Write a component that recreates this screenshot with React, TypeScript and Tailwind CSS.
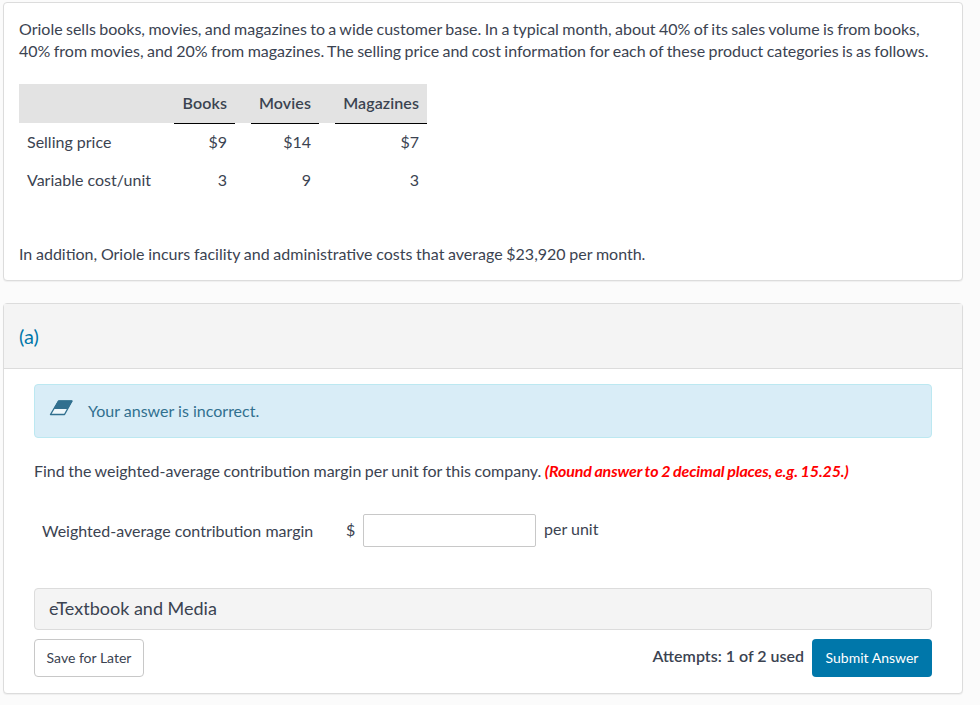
import React from "react";

const rows = [
    { label: "Selling price", books: "$9", movies: "$14", magazines: "$7" },
    { label: "Variable cost/unit", books: "3", movies: "9", magazines: "3" },
];

const EraserIcon = () => (
    <svg width="24" height="16" viewBox="0 0 24 16" className="shrink-0 -translate-y-[3px]">
        <path d="M9.5 1H23L15.5 14.5H1.5Z" fill="#eef7fb" stroke="#31708f" strokeWidth="1.4" strokeLinejoin="round" />
        <path d="M9.5 1H23L18.5 8.5H5.2Z" fill="#31708f" stroke="#31708f" strokeWidth="1" strokeLinejoin="round" />
    </svg>
);

export default function App() {
    return (
        <div className="min-h-[705px] w-[980px] bg-[#fbfbfb] pl-[3px] pt-[2px] pr-[17px] font-['Lato','Open_Sans',sans-serif] text-[#3b4351]">
            <div className="h-[279px] rounded-[4px] border border-[#dcdcdc] bg-white pl-[15px] pt-[15px] shadow-[0_1px_1px_rgba(0,0,0,0.05)]">
                <p className="w-[925px] text-[16px] leading-[22px] [word-spacing:-0.72px]">
                    Oriole sells books, movies, and magazines to a wide customer base. In a typical month, about 40% of its sales volume is from books, 40% from movies, and 20% from magazines. The selling price and cost information for each of these product categories is as follows.
                </p>
                <table className="mt-[22px] w-[408px] border-collapse text-[16px]">
                    <thead>
                        <tr className="h-[39px] bg-[#e3e3e3] font-bold">
                            <th className="w-[155px]"></th>
                            <th className="w-[61px] border-b border-black pr-[8px] text-right font-semibold tracking-[0.1px]">Books</th>
                            <th className="w-[16px]"></th>
                            <th className="w-[68px] border-b border-black pr-[8px] text-right font-semibold tracking-[0.1px]">Movies</th>
                            <th className="w-[16px]"></th>
                            <th className="w-[92px] border-b border-black pr-[8px] text-right font-semibold tracking-[0.1px]">Magazines</th>
                        </tr>
                    </thead>
                    <tbody>
                        {rows.map((row) => (
                            <tr key={row.label} className="h-[38px]">
                                <td className="pl-[8px]">{row.label}</td>
                                <td className="pr-[8px] text-right">{row.books}</td>
                                <td></td>
                                <td className="pr-[8px] text-right">{row.movies}</td>
                                <td></td>
                                <td className="pr-[8px] text-right">{row.magazines}</td>
                            </tr>
                        ))}
                    </tbody>
                </table>
                <p className="mt-[44px] text-[16px] leading-[22px] [word-spacing:-0.4px]">
                    In addition, Oriole incurs facility and administrative costs that average $23,920 per month.
                </p>
            </div>

            <div className="mt-[22px] h-[391px] rounded-[4px] border border-[#dcdcdc] bg-white shadow-[0_1px_1px_rgba(0,0,0,0.05)]">
                <div className="flex h-[65px] items-center border-b border-[#dcdcdc] bg-[#f4f4f4] pl-[15px] text-[20px] text-[#0077aa]">
                    (a)
                </div>
                <div className="px-[30px] pt-[15px]">
                    <div className="flex h-[54px] items-center gap-[15px] rounded-[4px] border border-[#bce8f1] bg-[#d9edf7] pl-[14px] text-[16px] text-[#31708f]">
                        <EraserIcon />
                        <span>Your answer is incorrect.</span>
                    </div>
                    <p className="mt-[22px] text-[16px] leading-[22px] [word-spacing:-0.6px]">
                        Find the weighted-average contribution margin per unit for this company. <em className="font-bold tracking-[-0.14px] text-[#ff0000]">(Round answer to 2 decimal places, e.g. 15.25.)</em>
                    </p>
                    <div className="mt-[32px] flex h-[33px] items-center text-[16px]">
                        <span className="ml-[8px] w-[304px]">Weighted-average contribution margin</span>
                        <span className="w-[17px] pb-[2px]">$</span>
                        <input type="text" className="h-[33px] w-[173px] rounded-[2px] border border-[#c8c8c8] bg-white" />
                        <span className="ml-[8px] pb-[4px]">per unit</span>
                    </div>
                    <div className="mt-[41px] flex h-[42px] items-center rounded-[4px] border border-[#dcdcdc] bg-[#f4f4f4] pb-[2px] pl-[14px] text-[18px]">
                        eTextbook and Media
                    </div>
                    <div className="mt-[9px] flex items-center justify-between">
                        <button className="h-[38px] w-[110px] rounded-[4px] border border-[#c8c8c8] bg-white pb-[1px] text-[14px]">
                            Save for Later
                        </button>
                        <div className="flex items-center gap-[8px]">
                            <span className="pb-[5px] text-[16px] font-semibold">Attempts: 1 of 2 used</span>
                            <button className="h-[38px] w-[120px] rounded-[4px] bg-[#0077aa] pb-[1px] text-[14px] text-white">
                                Submit Answer
                            </button>
                        </div>
                    </div>
                </div>
            </div>
        </div>
    );
}
